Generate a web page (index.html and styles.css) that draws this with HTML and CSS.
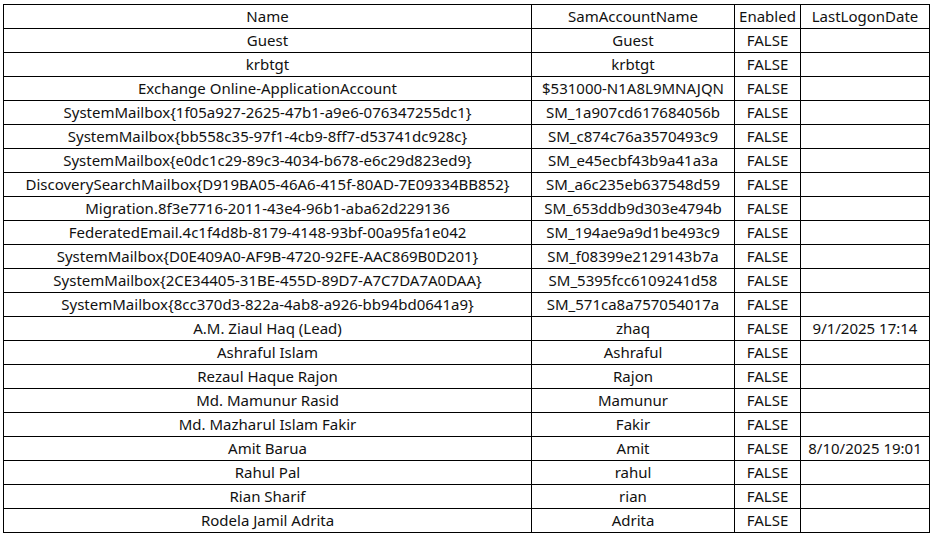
FILE: index.html
```html
<!DOCTYPE html>
<html>
<head>
<meta charset="utf-8">
<link rel="stylesheet" href="styles.css">
</head>
<body>
<table class="sheet">
<colgroup>
<col class="c-name"><col class="c-sam"><col class="c-en"><col class="c-date">
</colgroup>
<tr><td>Name</td><td>SamAccountName</td><td>Enabled</td><td>LastLogonDate</td></tr>
<tr><td>Guest</td><td>Guest</td><td>FALSE</td><td></td></tr>
<tr><td>krbtgt</td><td>krbtgt</td><td>FALSE</td><td></td></tr>
<tr><td>Exchange Online-ApplicationAccount</td><td>$531000-N1A8L9MNAJQN</td><td>FALSE</td><td></td></tr>
<tr><td>SystemMailbox{1f05a927-2625-47b1-a9e6-076347255dc1}</td><td>SM_1a907cd617684056b</td><td>FALSE</td><td></td></tr>
<tr><td>SystemMailbox{bb558c35-97f1-4cb9-8ff7-d53741dc928c}</td><td>SM_c874c76a3570493c9</td><td>FALSE</td><td></td></tr>
<tr><td>SystemMailbox{e0dc1c29-89c3-4034-b678-e6c29d823ed9}</td><td>SM_e45ecbf43b9a41a3a</td><td>FALSE</td><td></td></tr>
<tr><td>DiscoverySearchMailbox{D919BA05-46A6-415f-80AD-7E09334BB852}</td><td>SM_a6c235eb637548d59</td><td>FALSE</td><td></td></tr>
<tr><td>Migration.8f3e7716-2011-43e4-96b1-aba62d229136</td><td>SM_653ddb9d303e4794b</td><td>FALSE</td><td></td></tr>
<tr><td>FederatedEmail.4c1f4d8b-8179-4148-93bf-00a95fa1e042</td><td>SM_194ae9a9d1be493c9</td><td>FALSE</td><td></td></tr>
<tr><td>SystemMailbox{D0E409A0-AF9B-4720-92FE-AAC869B0D201}</td><td>SM_f08399e2129143b7a</td><td>FALSE</td><td></td></tr>
<tr><td>SystemMailbox{2CE34405-31BE-455D-89D7-A7C7DA7A0DAA}</td><td>SM_5395fcc6109241d58</td><td>FALSE</td><td></td></tr>
<tr><td>SystemMailbox{8cc370d3-822a-4ab8-a926-bb94bd0641a9}</td><td>SM_571ca8a757054017a</td><td>FALSE</td><td></td></tr>
<tr><td>A.M. Ziaul Haq (Lead)</td><td>zhaq</td><td>FALSE</td><td>9/1/2025 17:14</td></tr>
<tr><td>Ashraful Islam</td><td>Ashraful</td><td>FALSE</td><td></td></tr>
<tr><td>Rezaul Haque Rajon</td><td>Rajon</td><td>FALSE</td><td></td></tr>
<tr><td>Md. Mamunur Rasid</td><td>Mamunur</td><td>FALSE</td><td></td></tr>
<tr><td>Md. Mazharul Islam Fakir</td><td>Fakir</td><td>FALSE</td><td></td></tr>
<tr><td>Amit Barua</td><td>Amit</td><td>FALSE</td><td>8/10/2025 19:01</td></tr>
<tr><td>Rahul Pal</td><td>rahul</td><td>FALSE</td><td></td></tr>
<tr><td>Rian Sharif</td><td>rian</td><td>FALSE</td><td></td></tr>
<tr><td>Rodela Jamil Adrita</td><td>Adrita</td><td>FALSE</td><td></td></tr>
</table>
</body>
</html>
```
FILE: styles.css
```css
html, body {
  margin: 0;
  background: #ffffff;
}
body {
  padding: 4px 0 0 3px;
}
.sheet {
  border-collapse: collapse;
  table-layout: fixed;
  width: 927px;
  font-family: "Noto Sans", "Open Sans", sans-serif;
  font-size: 15px;
  color: #111111;
}
.c-name { width: 528px; }
.c-sam { width: 203px; }
.c-en { width: 66px; }
.c-date { width: 129px; }
.sheet td {
  border: 1px solid #000000;
  height: 23px;
  padding: 0 1px;
  text-align: center;
  white-space: nowrap;
  overflow: hidden;
  line-height: 23px;
  box-sizing: border-box;
}
```
